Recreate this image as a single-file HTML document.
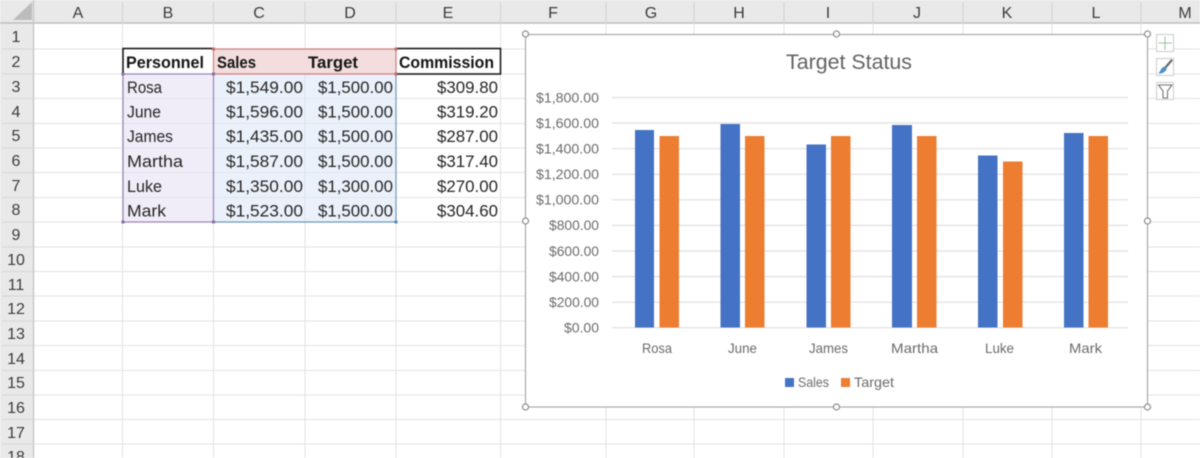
<!DOCTYPE html>
<html lang="en"><head><meta charset="utf-8"><title>Target Status</title>
<style>
html,body{margin:0;padding:0;background:#fff;width:1200px;height:458px;overflow:hidden}
svg{display:block;filter:blur(.45px)}
text{font-family:"Liberation Sans",sans-serif;fill:#262626}
.h{font-size:16px;fill:#3c3c3c;text-anchor:middle}
.t{font-size:17px}
.b{font-size:17px;font-weight:bold;fill:#151515}
.a{font-size:14px;fill:#6b6b6b}
.c{font-size:14px;fill:#6b6b6b}
</style></head><body>
<svg width="1200" height="458" viewBox="0 0 1200 458" xmlns="http://www.w3.org/2000/svg">
<rect width="1200" height="458" fill="#fff"/>
<!-- headers -->
<rect x="0" y="0" width="1200" height="23" fill="#e9e9e9"/>
<rect x="0" y="0" width="34" height="458" fill="#e9e9e9"/>
<path d="M32 2V20H13Z" fill="#bcbcbc"/>
<path d="M0 23H1200" stroke="#bdbdbd" stroke-width="1.400" fill="none"/>
<path d="M33.500 0V458" stroke="#c6c6c6" stroke-width="1.400" fill="none"/>
<path d="M122.500 2V23M213.500 2V23M305 2V23M396 2V23M500.500 2V23M606 2V23M694 2V23M784 2V23M873 2V23M963 2V23M1052 2V23M1141 2V23" stroke="#d2d2d2" fill="none"/>
<path d="M2 49H33M2 74H33M2 98.500H33M2 123.500H33M2 148H33M2 172.500H33M2 197.500H33M2 222H33M2 247H33M2 271.500H33M2 296H33M2 321H33M2 345.500H33M2 370.500H33M2 395H33M2 419.500H33M2 444H33" stroke="#d6d6d6" fill="none"/>
<!-- grid -->
<path d="M34 49H1200M34 74H1200M34 98.500H1200M34 123.500H1200M34 148H1200M34 172.500H1200M34 197.500H1200M34 222H1200M34 247H1200M34 271.500H1200M34 296H1200M34 321H1200M34 345.500H1200M34 370.500H1200M34 395H1200M34 419.500H1200M34 444H1200M122.500 23V458M213.500 23V458M305 23V458M396 23V458M500.500 23V458M606 23V458M694 23V458M784 23V458M873 23V458M963 23V458M1052 23V458M1141 23V458" stroke="#e2e2e2" fill="none"/>
<g>
<text class="h" x="78" y="18">A</text><text class="h" x="168" y="18">B</text><text class="h" x="259" y="18">C</text><text class="h" x="350" y="18">D</text><text class="h" x="448" y="18">E</text><text class="h" x="553" y="18">F</text><text class="h" x="651" y="18">G</text><text class="h" x="739" y="18">H</text><text class="h" x="828" y="18">I</text><text class="h" x="917" y="18">J</text><text class="h" x="1007" y="18">K</text><text class="h" x="1096" y="18">L</text><text class="h" x="1185" y="18">M</text>
<text class="h" x="16" y="42">1</text><text class="h" x="16" y="67">2</text><text class="h" x="16" y="92">3</text><text class="h" x="16" y="117">4</text><text class="h" x="16" y="141">5</text><text class="h" x="16" y="166">6</text><text class="h" x="16" y="191">7</text><text class="h" x="16" y="215">8</text><text class="h" x="16" y="240">9</text><text class="h" x="16" y="265">10</text><text class="h" x="16" y="290">11</text><text class="h" x="16" y="314">12</text><text class="h" x="16" y="339">13</text><text class="h" x="16" y="364">14</text><text class="h" x="16" y="388">15</text><text class="h" x="16" y="413">16</text><text class="h" x="16" y="438">17</text><text class="h" x="16" y="462">18</text>
</g>
<!-- table fills -->
<rect x="123" y="74" width="90" height="148" fill="#f0ecf8"/>
<rect x="214" y="74" width="182" height="148" fill="#ebf1fa"/>
<rect x="214" y="49" width="182" height="25" fill="#f3dddd"/>
<path d="M123 98.500H396M123 123.500H396M123 148H396M123 172.500H396M123 197.500H396M305 74V222" stroke="#e3e3ea" fill="none"/>
<!-- range borders -->
<path d="M123 74V222H213.500V74" stroke="#9a84b5" stroke-width="1.200" fill="none"/>
<path d="M213.500 222H396V74" stroke="#6f96bd" stroke-width="1.200" fill="none"/>
<path d="M213.500 49H396V74H213.500Z" stroke="#cc7f7f" stroke-width="1.200" fill="none"/>
<path d="M123 74H213" stroke="#9a84b5" stroke-width="1.200"/>
<path d="M123 74V48.500H213.500" stroke="#111" stroke-width="1.500" fill="none"/>
<path d="M396.500 48.500H500.500V74H396.500" stroke="#111" stroke-width="1.500" fill="none"/>
<g fill="#8a70a8"><rect x="121.500" y="72.500" width="3" height="3"/><rect x="121.500" y="220.500" width="3" height="3"/><rect x="212" y="220.500" width="3" height="3"/><rect x="212" y="72.500" width="3" height="3"/></g>
<g fill="#c46a6a"><rect x="212" y="47.500" width="3" height="3"/><rect x="394.500" y="47.500" width="3" height="3"/><rect x="394.500" y="72.500" width="3" height="3"/></g>
<rect x="394.500" y="220.500" width="3" height="3" fill="#5f8ab5"/>
<!-- table text -->
<text class="b" x="126" y="68" textLength="78" lengthAdjust="spacingAndGlyphs">Personnel</text>
<text class="b" x="217" y="68" textLength="39" lengthAdjust="spacingAndGlyphs">Sales</text>
<text class="b" x="308" y="68" textLength="50" lengthAdjust="spacingAndGlyphs">Target</text>
<text class="b" x="399" y="68" textLength="95" lengthAdjust="spacingAndGlyphs">Commission</text>
<text class="t" x="127" y="93" textLength="35" lengthAdjust="spacingAndGlyphs">Rosa</text>
<text class="t" x="127" y="117.500" textLength="34" lengthAdjust="spacingAndGlyphs">June</text>
<text class="t" x="127" y="142" textLength="46" lengthAdjust="spacingAndGlyphs">James</text>
<text class="t" x="127" y="167" textLength="56" lengthAdjust="spacingAndGlyphs">Martha</text>
<text class="t" x="127" y="192" textLength="35" lengthAdjust="spacingAndGlyphs">Luke</text>
<text class="t" x="127" y="216.500" textLength="39" lengthAdjust="spacingAndGlyphs">Mark</text>
<text class="t" x="226" y="93" textLength="77" lengthAdjust="spacingAndGlyphs">$1,549.00</text>
<text class="t" x="226" y="117.500" textLength="77" lengthAdjust="spacingAndGlyphs">$1,596.00</text>
<text class="t" x="226" y="142" textLength="77" lengthAdjust="spacingAndGlyphs">$1,435.00</text>
<text class="t" x="226" y="167" textLength="77" lengthAdjust="spacingAndGlyphs">$1,587.00</text>
<text class="t" x="226" y="192" textLength="77" lengthAdjust="spacingAndGlyphs">$1,350.00</text>
<text class="t" x="226" y="216.500" textLength="77" lengthAdjust="spacingAndGlyphs">$1,523.00</text>
<text class="t" x="318" y="93" textLength="75" lengthAdjust="spacingAndGlyphs">$1,500.00</text>
<text class="t" x="318" y="117.500" textLength="75" lengthAdjust="spacingAndGlyphs">$1,500.00</text>
<text class="t" x="318" y="142" textLength="75" lengthAdjust="spacingAndGlyphs">$1,500.00</text>
<text class="t" x="318" y="167" textLength="75" lengthAdjust="spacingAndGlyphs">$1,500.00</text>
<text class="t" x="318" y="192" textLength="75" lengthAdjust="spacingAndGlyphs">$1,300.00</text>
<text class="t" x="318" y="216.500" textLength="75" lengthAdjust="spacingAndGlyphs">$1,500.00</text>
<text class="t" x="437" y="93" textLength="61" lengthAdjust="spacingAndGlyphs">$309.80</text>
<text class="t" x="437" y="117.500" textLength="61" lengthAdjust="spacingAndGlyphs">$319.20</text>
<text class="t" x="437" y="142" textLength="61" lengthAdjust="spacingAndGlyphs">$287.00</text>
<text class="t" x="437" y="167" textLength="61" lengthAdjust="spacingAndGlyphs">$317.40</text>
<text class="t" x="437" y="192" textLength="61" lengthAdjust="spacingAndGlyphs">$270.00</text>
<text class="t" x="437" y="216.500" textLength="61" lengthAdjust="spacingAndGlyphs">$304.60</text>
<!-- chart -->
<rect x="525.500" y="34.500" width="622" height="372.500" fill="#fff" stroke="#a9a9a9" stroke-width="1.200"/>
<text x="786" y="69" style="fill:#636363;font-size:21px" textLength="126" lengthAdjust="spacingAndGlyphs">Target Status</text>
<path d="M612 97.500H1128M612 123H1128M612 148.700H1128M612 174.300H1128M612 199.800H1128M612 225.400H1128M612 251H1128M612 276.600H1128M612 302.200H1128M612 327.700H1128" stroke="#dfdfdf" stroke-width="1.200" fill="none"/>
<g>
<text class="a" x="536" y="102.500" textLength="63" lengthAdjust="spacingAndGlyphs">$1,800.00</text>
<text class="a" x="536" y="128" textLength="63" lengthAdjust="spacingAndGlyphs">$1,600.00</text>
<text class="a" x="536" y="153.500" textLength="63" lengthAdjust="spacingAndGlyphs">$1,400.00</text>
<text class="a" x="536" y="179" textLength="63" lengthAdjust="spacingAndGlyphs">$1,200.00</text>
<text class="a" x="536" y="204.500" textLength="63" lengthAdjust="spacingAndGlyphs">$1,000.00</text>
<text class="a" x="549" y="230" textLength="50" lengthAdjust="spacingAndGlyphs">$800.00</text>
<text class="a" x="549" y="256" textLength="50" lengthAdjust="spacingAndGlyphs">$600.00</text>
<text class="a" x="549" y="281.500" textLength="50" lengthAdjust="spacingAndGlyphs">$400.00</text>
<text class="a" x="549" y="307" textLength="50" lengthAdjust="spacingAndGlyphs">$200.00</text>
<text class="a" x="564" y="332.500" textLength="35" lengthAdjust="spacingAndGlyphs">$0.00</text>
</g>
<g fill="#4472c4">
<rect x="635" y="130" width="19" height="197.500"/>
<rect x="720.500" y="124" width="19.500" height="203.500"/>
<rect x="806.500" y="144.500" width="19.500" height="183"/>
<rect x="892" y="125" width="20" height="202.500"/>
<rect x="978" y="155.500" width="19.500" height="172"/>
<rect x="1064" y="133" width="19.500" height="194.500"/>
</g>
<g fill="#ed7d31">
<rect x="659.500" y="136" width="19.500" height="191.500"/>
<rect x="745" y="136" width="19.500" height="191.500"/>
<rect x="831" y="136" width="19.500" height="191.500"/>
<rect x="917" y="136" width="19.500" height="191.500"/>
<rect x="1003" y="161.500" width="19.500" height="166"/>
<rect x="1088.500" y="136" width="19.500" height="191.500"/>
</g>
<text class="c" x="642" y="353" textLength="30" lengthAdjust="spacingAndGlyphs">Rosa</text>
<text class="c" x="728" y="353" textLength="29" lengthAdjust="spacingAndGlyphs">June</text>
<text class="c" x="809" y="353" textLength="39" lengthAdjust="spacingAndGlyphs">James</text>
<text class="c" x="891" y="353" textLength="47" lengthAdjust="spacingAndGlyphs">Martha</text>
<text class="c" x="985" y="353" textLength="29" lengthAdjust="spacingAndGlyphs">Luke</text>
<text class="c" x="1069" y="353" textLength="33" lengthAdjust="spacingAndGlyphs">Mark</text>
<rect x="785" y="378" width="9" height="9" fill="#4472c4"/>
<text class="c" x="798" y="387" textLength="31" lengthAdjust="spacingAndGlyphs">Sales</text>
<rect x="841" y="378" width="9" height="9" fill="#ed7d31"/>
<text class="c" x="854" y="387" textLength="40" lengthAdjust="spacingAndGlyphs">Target</text>
<g fill="#fff" stroke="#8c8c8c" stroke-width="1.200">
<circle cx="525.500" cy="34" r="3"/><circle cx="836.500" cy="34" r="3"/><circle cx="1147.500" cy="34" r="3"/>
<circle cx="525.500" cy="221" r="3"/><circle cx="1147.500" cy="221" r="3"/>
<circle cx="525.500" cy="407" r="3"/><circle cx="836.500" cy="407" r="3"/><circle cx="1147.500" cy="407" r="3"/>
</g>
<!-- chart buttons -->
<g fill="#fff" stroke="#cccccc">
<rect x="1156.500" y="34.500" width="17" height="17"/>
<rect x="1156.500" y="58.500" width="17" height="17"/>
<rect x="1156.500" y="82.500" width="17" height="17"/>
</g>
<path d="M1165 36.500V50M1158.500 43H1172" stroke="#9cc4a6" stroke-width="1.100" fill="none"/>
<path d="M1165 68L1171.500 60.500" stroke="#6e6e6e" stroke-width="2.400" stroke-linecap="round" fill="none"/>
<path d="M1158 73.500C1160.500 72.500 1160 68.500 1163.500 67C1165.500 66.500 1167 68 1166.500 69.500C1165 72.500 1161.500 74 1158 73.500Z" fill="#4f8fc9"/>
<path d="M1158.500 85H1172L1167.500 91V98H1163V91Z" fill="#fff" stroke="#737373" stroke-width="1.100"/>
</svg>
</body></html>
